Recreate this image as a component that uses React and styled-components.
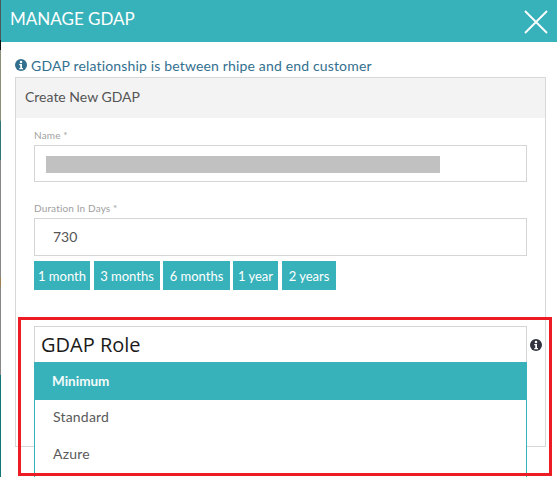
import React from "react";
import styled, { createGlobalStyle } from "styled-components";

const Global = createGlobalStyle`
  html, body {
    margin: 0;
    padding: 0;
    background: #fff;
  }
  * {
    box-sizing: border-box;
  }
`;

const Page = styled.div`
  position: relative;
  width: 557px;
  height: 477px;
  overflow: hidden;
  display: flex;
  font-family: "Lato", "Open Sans", sans-serif;
`;

const Backdrop = styled.div`
  width: 1px;
  flex: none;
  background: linear-gradient(
    to bottom,
    #4a5a5c 0 40px,
    #111 40px 50px,
    #8d8d7c 50px 120px,
    #2f7678 122px 160px,
    #888 160px 277px,
    #a08050 278px 286px,
    #888 287px 375px,
    #127678 375px 477px
  );
`;

const Modal = styled.div`
  flex: 1;
  display: flex;
  flex-direction: column;
  min-width: 0;
`;

const Header = styled.div`
  height: 42px;
  flex: none;
  background: #37b2ba;
  color: #fff;
  display: flex;
  align-items: center;
  justify-content: space-between;
  padding: 0 9px;
`;

const Title = styled.div`
  font-size: 17px;
  margin-bottom: 6px;
`;

const Close = styled.svg`
  width: 24px;
  height: 24px;
  display: block;
  margin-top: 2px;
`;

const Body = styled.div`
  padding: 13px 10px 0 14px;
`;

const Notice = styled.div`
  display: flex;
  align-items: center;
  gap: 4px;
  height: 22px;
  padding-bottom: 2px;
  color: #33708f;
  font-size: 14px;
  letter-spacing: 0.16px;
`;

const Panel = styled.div`
  border: 1px solid #d8d8d8;
  height: 370px;
  width: 531px;
`;

const PanelTitle = styled.div`
  height: 40px;
  background: #f3f3f3;
  display: flex;
  align-items: center;
  padding: 0 0 4px 9px;
  font-size: 14px;
  color: #555;
`;

const PanelBody = styled.div`
  padding: 12px 18px 0 18px;
`;

const Label = styled.div`
  font-size: 10px;
  line-height: 10px;
  letter-spacing: 0.15px;
  color: #a0a0a0;
  margin-bottom: 5px;
`;

const Field = styled.div`
  width: 493px;
  height: ${(p) => p.$height}px;
  border: 1px solid #d5d5d5;
  display: flex;
  align-items: center;
  padding: 0 11px;
  margin-bottom: ${(p) => p.$after || 0}px;
`;

const FieldValue = styled.span`
  padding: 0 0 1px 7px;
  font-size: 14px;
  color: #555;
`;

const Redacted = styled.div`
  width: 394px;
  height: 17px;
  margin-top: 2px;
  background: #c1c1c1;
`;

const Presets = styled.div`
  display: flex;
  margin-top: 5px;
`;

const Preset = styled.button`
  height: 29px;
  width: ${(p) => p.$width}px;
  margin-right: ${(p) => p.$gap || 0}px;
  padding: 0;
  border: 0;
  background: #37b2ba;
  color: #fff;
  font-family: inherit;
  font-size: 13px;
  text-align: center;
`;

const RoleRow = styled.div`
  display: flex;
  align-items: flex-start;
  margin-top: 36px;
  width: 520px;
`;

const RoleSelect = styled.div`
  width: 493px;
  flex: none;
`;

const RoleTitle = styled.div`
  height: 36px;
  border: 1px solid #d5d5d5;
  border-bottom: 0;
  display: flex;
  align-items: center;
  padding-left: 6px;
  font-family: "Open Sans", sans-serif;
  font-size: 20px;
  color: #1a1a1a;
`;

const RoleList = styled.div`
  border: solid #37b2ba;
  border-width: 0 1px;
  background: #fff;
  height: 120px;
`;

const RoleItem = styled.div`
  height: ${(p) => (p.$active ? 38 : 37)}px;
  display: flex;
  align-items: center;
  padding: ${(p) => (p.$active ? "0 0 0 18px" : "0 0 4px 18px")};
  font-size: ${(p) => (p.$active ? 13.5 : 14)}px;
  letter-spacing: ${(p) => (p.$active ? 0 : 0.2)}px;
  font-weight: ${(p) => (p.$active ? 700 : 400)};
  color: ${(p) => (p.$active ? "#f2fbfb" : "#5a5a5a")};
  background: ${(p) => (p.$active ? "#37b2ba" : "transparent")};
  margin: ${(p) => (p.$active ? "0 -1px" : "0")};
`;

const RoleInfo = styled.div`
  margin: 13px 0 0 3px;
`;

const Highlight = styled.div`
  position: absolute;
  left: 18px;
  top: 317px;
  width: 534px;
  height: 159px;
  border: 3px solid #ed1c24;
  pointer-events: none;
`;

const InfoIcon = ({ size, color }) => (
  <svg width={size} height={size} viewBox="0 0 24 24" style={{ flex: "none", display: "block" }}>
    <circle cx="12" cy="12" r="12" fill={color} />
    <circle cx="12" cy="5.8" r="2.5" fill="#fff" />
    <path d="M8.5 10h5.5v8h2v2.4H8.5V18h2v-5.6h-2z" fill="#fff" />
  </svg>
);

export default function App() {
  return (
    <>
      <Global />
      <Page>
        <Backdrop />
        <Modal>
          <Header>
            <Title>MANAGE GDAP</Title>
            <Close viewBox="0 0 24 24">
              <path d="M1 1 L23 23 M23 1 L1 23" stroke="#fff" strokeWidth="1.8" fill="none" />
            </Close>
          </Header>
          <Body>
            <Notice>
              <InfoIcon size={12} color="#33708f" />
              GDAP relationship is between rhipe and end customer
            </Notice>
            <Panel>
              <PanelTitle>Create New GDAP</PanelTitle>
              <PanelBody>
                <Label>Name *</Label>
                <Field $height={37} $after={21}>
                  <Redacted />
                </Field>
                <Label>Duration In Days *</Label>
                <Field $height={38}>
                  <FieldValue>730</FieldValue>
                </Field>
                <Presets>
                  <Preset $width={56} $gap={4}>1 month</Preset>
                  <Preset $width={66} $gap={3}>3 months</Preset>
                  <Preset $width={67} $gap={3}>6 months</Preset>
                  <Preset $width={45} $gap={4}>1 year</Preset>
                  <Preset $width={54}>2 years</Preset>
                </Presets>
                <RoleRow>
                  <RoleSelect>
                    <RoleTitle>GDAP Role</RoleTitle>
                    <RoleList>
                      <RoleItem $active>Minimum</RoleItem>
                      <RoleItem>Standard</RoleItem>
                      <RoleItem>Azure</RoleItem>
                    </RoleList>
                  </RoleSelect>
                  <RoleInfo>
                    <InfoIcon size={12} color="#33333f" />
                  </RoleInfo>
                </RoleRow>
              </PanelBody>
            </Panel>
          </Body>
        </Modal>
        <Highlight />
      </Page>
    </>
  );
}
